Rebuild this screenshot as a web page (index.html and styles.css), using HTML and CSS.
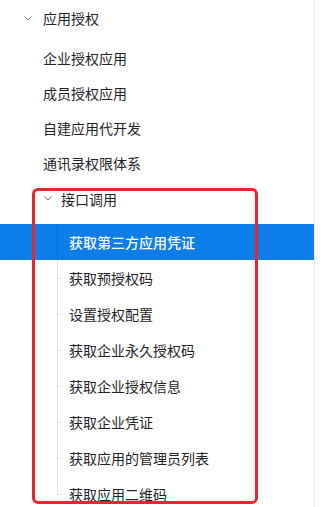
FILE: index.html
```html
<!DOCTYPE html>
<html lang="zh-CN">
<head>
<meta charset="utf-8">
<link rel="stylesheet" href="styles.css">
</head>
<body>
<nav class="nav">
  <div class="group-head">
    <svg class="chev" viewBox="0 0 8 5" width="8" height="5"><path d="M0.5 0.5 L4 4 L7.5 0.5" fill="none" stroke="#777" stroke-width="1"/></svg>
    <span>应用授权</span>
  </div>
  <ul class="list">
    <li class="item">企业授权应用</li>
    <li class="item">成员授权应用</li>
    <li class="item">自建应用代开发</li>
    <li class="item">通讯录权限体系</li>
    <li class="sub">
      <div class="sub-head">
        <svg class="chev" viewBox="0 0 8 5" width="8" height="5"><path d="M0.5 0.5 L4 4 L7.5 0.5" fill="none" stroke="#777" stroke-width="1"/></svg>
        <span>接口调用</span>
      </div>
      <ul class="tree">
        <li class="leaf active">获取第三方应用凭证</li>
        <li class="leaf">获取预授权码</li>
        <li class="leaf">设置授权配置</li>
        <li class="leaf">获取企业永久授权码</li>
        <li class="leaf">获取企业授权信息</li>
        <li class="leaf">获取企业凭证</li>
        <li class="leaf">获取应用的管理员列表</li>
        <li class="leaf">获取应用二维码</li>
      </ul>
      <div class="highlight-box"></div>
    </li>
  </ul>
</nav>
</body>
</html>
```
FILE: styles.css
```css
html, body {
  margin: 0;
  padding: 0;
  background: #fff;
}
body {
  font-family: "Noto Sans CJK SC", "Noto Sans", sans-serif;
  font-size: 14px;
  color: #1f2329;
  overflow: hidden;
}
.nav {
  width: 314px;
  height: 507px;
  border-right: 1px solid #e9e9e9;
  overflow: hidden;
}
ul {
  list-style: none;
  margin: 0;
  padding: 0;
}
.group-head {
  display: flex;
  align-items: center;
  height: 36px;
  padding-left: 24px;
  gap: 11px;
  color: #1f2329;
}
.chev {
  flex: none;
  display: block;
}
.list {
  padding-top: 5px;
}
.item {
  height: 35px;
  line-height: 35px;
  padding-left: 43px;
}
.sub {
  position: relative;
}
.sub-head {
  display: flex;
  align-items: center;
  height: 35px;
  padding-left: 44px;
  gap: 9px;
}
.tree {
  padding-top: 8px;
}
.leaf {
  position: relative;
  height: 36px;
  line-height: 36px;
  padding-left: 69px;
}
.leaf::before {
  content: "";
  position: absolute;
  left: 57px;
  top: 0;
  bottom: 0;
  border-left: 1px solid rgba(0, 0, 0, 0.1);
}
.leaf:last-child::before {
  bottom: 50%;
}
.leaf::after {
  content: "";
  position: absolute;
  left: 57px;
  top: 50%;
  width: 5px;
  border-top: 1px solid rgba(0, 0, 0, 0.1);
}
.leaf.active {
  background: #0c7de9;
  color: #fff;
  font-weight: 500;
}
.leaf.active::after {
  display: none;
}
.highlight-box {
  position: absolute;
  left: 32px;
  top: 7px;
  width: 220px;
  height: 310px;
  border: 3px solid #e8262c;
  border-radius: 6px;
  pointer-events: none;
}
```
